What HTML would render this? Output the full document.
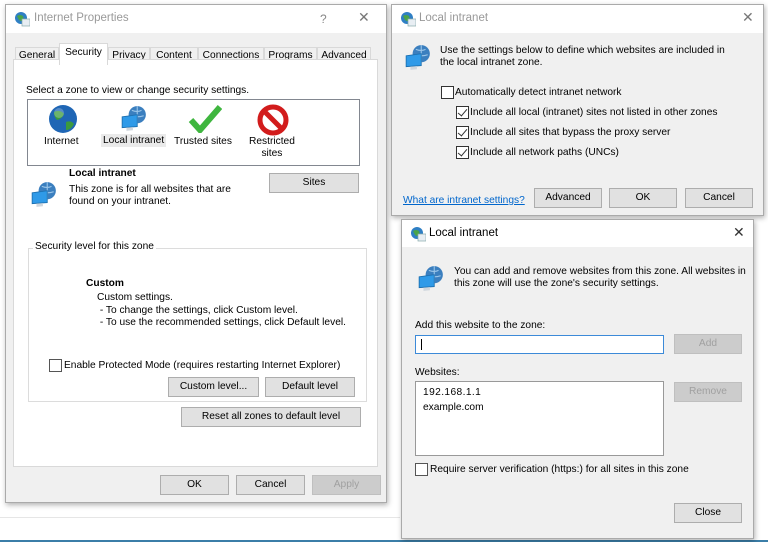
<!DOCTYPE html>
<html><head><meta charset="utf-8"><style>
*{box-sizing:border-box;margin:0;padding:0}
body{width:768px;height:542px;position:relative;overflow:hidden;background:#fff;font-family:"Liberation Sans",sans-serif;font-size:10.2px;color:#000}
.a{position:absolute;white-space:nowrap}
.win{position:absolute;background:#f0f0f0;border:1px solid #aaa;box-shadow:1px 2px 5px rgba(0,0,0,.3)}
.tb{position:absolute;left:0;top:0;right:0;height:28px;background:#fff}
.tt{position:absolute;top:7px;left:27px;font-size:11.5px;color:#999;white-space:nowrap}
.x{position:absolute;top:4px;font-size:14px;color:#777;font-weight:lighter}
.btn{position:absolute;height:20px;background:#e1e1e1;border:1px solid #adadad;text-align:center;line-height:18px;font-size:10.2px;white-space:nowrap}
.dis{color:#a0a0a0;background:#ccc;border-color:#bfbfbf}
.cb{position:absolute;width:13px;height:13px;border:1px solid #333;background:#fff}
.cb.k::after{content:"";position:absolute;left:3px;top:0px;width:4px;height:8px;border:solid #333;border-width:0 1.5px 1.5px 0;transform:rotate(40deg)}
.tab{position:absolute;top:42px;height:17px;border:1px solid #d9d9d9;border-bottom:none;background:#f0f0f0;text-align:center;line-height:15px;white-space:nowrap}
</style></head><body>
<svg width="0" height="0" style="position:absolute"><defs>
<symbol id="intra" viewBox="0 0 26 26">
<circle cx="16" cy="9" r="8" fill="#3b7fbf"/><path d="M11 5q5 2 9 0M10 10q6 2 12 0M16 1v16" stroke="#9cc7ea" stroke-width="1" fill="none"/>
<path d="M2 11l14 -2v11l-14 1z" fill="#2f9ae8" stroke="#1b6fb0" stroke-width=".8"/>
<path d="M6 21l6 -.5v3l-6 .5z" fill="#cfd6dd"/>
</symbol>
<symbol id="small" viewBox="0 0 16 16"><circle cx="7" cy="7" r="6" fill="#2f7fc4"/><path d="M3 5q3 -2 6 0l1 4q-3 2 -5 0z" fill="#4aa44a"/><rect x="8" y="8" width="8" height="7" fill="#e8eef3" stroke="#8aa" stroke-width=".7"/></symbol>
</defs></svg>

<!-- Window 1 -->
<div class="win" style="left:5px;top:4px;width:382px;height:499px">
<div class="tb"></div>
<svg class="a" style="left:8px;top:6px" width="16" height="16"><use href="#small"/></svg>
<div class="tt" style="left:28px">Internet Properties</div>
<div class="a" style="left:314px;top:7px;font-size:12px;color:#888">?</div>
<div class="x" style="left:352px">✕</div>
<div class="tab" style="left:9px;width:44px">General</div>
<div class="tab" style="left:53px;top:38px;height:22px;width:49px;background:#fff;z-index:2;line-height:17px">Security</div>
<div class="tab" style="left:102px;width:42px">Privacy</div>
<div class="tab" style="left:144px;width:48px">Content</div>
<div class="tab" style="left:192px;width:66px">Connections</div>
<div class="tab" style="left:258px;width:53px">Programs</div>
<div class="tab" style="left:311px;width:54px">Advanced</div>
<div class="a" style="left:7px;top:54px;width:365px;height:408px;background:#fff;border:1px solid #d9d9d9"></div>
<div class="a" style="left:20px;top:80px">Select a zone to view or change security settings.</div>
<div class="a" style="left:21px;top:94px;width:333px;height:67px;border:1px solid #828790;background:#fff"></div>
<svg class="a" style="left:42px;top:99px" width="30" height="30"><circle cx="15" cy="15" r="14" fill="#1f66b5"/><path d="M6 8q6 -3 10 2q-2 5 -7 6q-3 -3 -3 -8zM18 18q5 -2 8 2q-3 6 -8 6z" fill="#3b9a3e"/><circle cx="11" cy="9" r="5" fill="#fff" opacity=".25"/></svg>
<div class="a" style="left:38px;top:131px">Internet</div>
<svg class="a" style="left:114px;top:100px" width="28" height="28"><use href="#intra"/></svg>
<div class="a" style="left:95px;top:129px;padding:1px 2px;background:#eaeaea">Local intranet</div>
<svg class="a" style="left:182px;top:100px" width="34" height="28"><path d="M3 15l9 10l20 -23" stroke="#3fb63f" stroke-width="6" fill="none"/></svg>
<div class="a" style="left:168px;top:131px">Trusted sites</div>
<svg class="a" style="left:251px;top:99px" width="32" height="32"><circle cx="16" cy="16" r="13" fill="none" stroke="#d21c1c" stroke-width="5"/><path d="M7 7l18 18" stroke="#d21c1c" stroke-width="5"/></svg>
<div class="a" style="left:243px;top:131px;text-align:center;line-height:12px">Restricted<br>sites</div>
<svg class="a" style="left:24px;top:176px" width="28" height="28"><use href="#intra"/></svg>
<div class="a" style="left:63px;top:163px;font-weight:bold">Local intranet</div>
<div class="a" style="left:63px;top:179px;line-height:12px">This zone is for all websites that are<br>found on your intranet.</div>
<div class="btn" style="left:263px;top:168px;width:90px">Sites</div>
<div class="a" style="left:22px;top:243px;width:339px;height:154px;border:1px solid #dcdcdc"></div>
<div class="a" style="left:27px;top:236px;background:#fff;padding:0 2px">Security level for this zone</div>
<div class="a" style="left:80px;top:273px;font-weight:bold">Custom</div>
<div class="a" style="left:91px;top:287px;line-height:12.5px">Custom settings.<br>&nbsp;- To change the settings, click Custom level.<br>&nbsp;- To use the recommended settings, click Default level.</div>
<div class="cb" style="left:43px;top:354px;border-color:#555"></div>
<div class="a" style="left:58px;top:355px">Enable Protected Mode (requires restarting Internet Explorer)</div>
<div class="btn" style="left:162px;top:372px;width:91px">Custom level...</div>
<div class="btn" style="left:259px;top:372px;width:90px">Default level</div>
<div class="btn" style="left:175px;top:402px;width:180px">Reset all zones to default level</div>
<div class="btn" style="left:154px;top:470px;width:69px">OK</div>
<div class="btn" style="left:230px;top:470px;width:69px">Cancel</div>
<div class="btn dis" style="left:306px;top:470px;width:69px">Apply</div>
</div>

<div class="a" style="left:0;top:517px;width:400px;height:1px;background:#e6e6e6"></div>
<div class="a" style="left:0;top:540px;width:768px;height:2px;background:#3b7ea8"></div>

<!-- Window 2 -->
<div class="win" style="left:391px;top:4px;width:373px;height:212px">
<div class="tb"></div>
<svg class="a" style="left:8px;top:6px" width="16" height="16"><use href="#small"/></svg>
<div class="tt">Local intranet</div>
<div class="x" style="left:350px">✕</div>
<svg class="a" style="left:12px;top:39px" width="28" height="28"><use href="#intra"/></svg>
<div class="a" style="left:48px;top:40px;line-height:12px">Use the settings below to define which websites are included in<br>the local intranet zone.</div>
<div class="cb" style="left:49px;top:81px"></div>
<div class="a" style="left:63px;top:82px">Automatically detect intranet network</div>
<div class="cb k" style="left:64px;top:101px"></div>
<div class="a" style="left:78px;top:102px">Include all local (intranet) sites not listed in other zones</div>
<div class="cb k" style="left:64px;top:121px"></div>
<div class="a" style="left:78px;top:122px">Include all sites that bypass the proxy server</div>
<div class="cb k" style="left:64px;top:141px"></div>
<div class="a" style="left:78px;top:142px">Include all network paths (UNCs)</div>
<div class="a" style="left:11px;top:190px;color:#0066cc;text-decoration:underline">What are intranet settings?</div>
<div class="btn" style="left:142px;top:183px;width:68px">Advanced</div>
<div class="btn" style="left:217px;top:183px;width:68px">OK</div>
<div class="btn" style="left:293px;top:183px;width:68px">Cancel</div>
</div>

<!-- Window 3 -->
<div class="win" style="left:401px;top:219px;width:353px;height:320px">
<div class="tb" style="height:27px"></div>
<svg class="a" style="left:8px;top:6px" width="16" height="16"><use href="#small"/></svg>
<div class="tt" style="color:#000">Local intranet</div>
<div class="x" style="left:331px;color:#333">✕</div>
<svg class="a" style="left:15px;top:45px" width="28" height="28"><use href="#intra"/></svg>
<div class="a" style="left:52px;top:46px;line-height:12px">You can add and remove websites from this zone. All websites in<br>this zone will use the zone's security settings.</div>
<div class="a" style="left:13px;top:100px">Add this website to the zone:</div>
<div class="a" style="left:13px;top:115px;width:249px;height:19px;background:#fff;border:1px solid #3c8ad8"><div class="a" style="left:5px;top:3px;width:1px;height:11px;background:#000"></div></div>
<div class="btn dis" style="left:272px;top:114px;width:68px">Add</div>
<div class="a" style="left:13px;top:147px">Websites:</div>
<div class="a" style="left:13px;top:161px;width:249px;height:75px;background:#fff;border:1px solid #999"></div>
<div class="a" style="left:21px;top:167px;letter-spacing:.4px">192.168.1.1</div>
<div class="a" style="left:21px;top:182px">example.com</div>
<div class="btn dis" style="left:272px;top:162px;width:68px">Remove</div>
<div class="cb" style="left:13px;top:243px;border-color:#555"></div>
<div class="a" style="left:28px;top:244px">Require server verification (https:) for all sites in this zone</div>
<div class="btn" style="left:272px;top:283px;width:68px">Close</div>
</div>
</body></html>
